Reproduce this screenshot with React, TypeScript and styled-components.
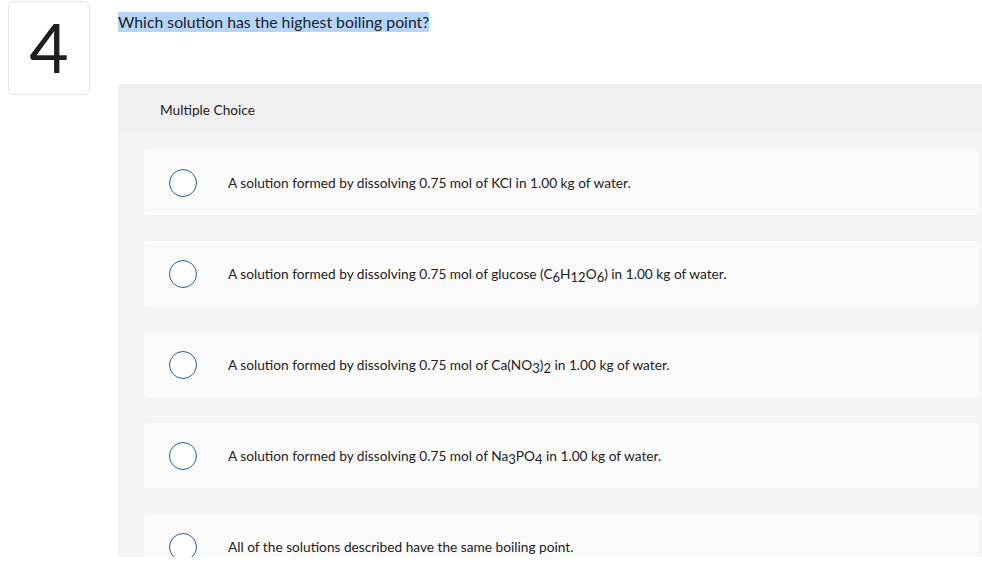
import React from "react";
import styled, { createGlobalStyle } from "styled-components";

const Global = createGlobalStyle`
  html, body { margin: 0; padding: 0; background: #ffffff; }
  body { font-family: Lato, "Open Sans", "Liberation Sans", sans-serif; color: #222222; }
`;

const Page = styled.div`
  display: flex;
  align-items: flex-start;
  width: 982px;
  height: 571px;
  overflow: hidden;
`;

const NumberBox = styled.div`
  flex: 0 0 auto;
  box-sizing: border-box;
  width: 82px;
  height: 94px;
  margin: 1px 0 0 8px;
  border: 1px solid #e4e4e4;
  border-radius: 5px;
  display: flex;
  align-items: center;
  justify-content: center;
  font-size: 68px;
  line-height: 1;
  color: #1e1e1e;
  padding-bottom: 2px;
`;

const Main = styled.div`
  flex: 1 1 auto;
  margin-left: 28px;
  display: flex;
  flex-direction: column;
`;

const Question = styled.div`
  margin-top: 12px;
  height: 72px;
  font-size: 15.8px;
  line-height: 20px;
`;

const Highlight = styled.span`
  background: #b4d5fe;
  padding: 0 0 1px;
`;

const Panel = styled.div`
  height: 473px;
  overflow: hidden;
  background: #f4f4f4;
`;

const PanelHeader = styled.div`
  height: 50px;
  background: #f0f0f0;
  display: flex;
  align-items: center;
  padding-left: 42px;
  font-size: 13.7px;
`;

const Options = styled.div`
  display: flex;
  flex-direction: column;
  gap: 26px;
  padding: 16px 3px 0 26px;
`;

const OptionCard = styled.div`
  height: 65px;
  flex: 0 0 auto;
  background: #fafafa;
  border-radius: 3px;
  display: flex;
  align-items: center;
  padding-left: 25px;
  gap: 31px;
  font-size: 13.7px;
`;

const Radio = styled.span`
  box-sizing: border-box;
  width: 28px;
  height: 28px;
  border-radius: 50%;
  border: 1.5px solid #1f5f9d;
  background: #ffffff;
  flex: 0 0 auto;
`;

const Sub = styled.sub`
  font-size: 0.95em;
  vertical-align: -0.2em;
  line-height: 0;
`;

const options: React.ReactNode[] = [
  <>A solution formed by dissolving 0.75 mol of KCl in 1.00 kg of water.</>,
  <>
    A solution formed by dissolving 0.75 mol of glucose (C<Sub>6</Sub>H<Sub>12</Sub>O<Sub>6</Sub>) in 1.00 kg of water.
  </>,
  <>
    A solution formed by dissolving 0.75 mol of Ca(NO<Sub>3</Sub>)<Sub>2</Sub> in 1.00 kg of water.
  </>,
  <>
    A solution formed by dissolving 0.75 mol of Na<Sub>3</Sub>PO<Sub>4</Sub> in 1.00 kg of water.
  </>,
  <>All of the solutions described have the same boiling point.</>,
];

export default function App() {
  return (
    <>
      <Global />
      <Page>
        <NumberBox>4</NumberBox>
        <Main>
          <Question>
            <Highlight>Which solution has the highest boiling point?</Highlight>
          </Question>
          <Panel>
            <PanelHeader>Multiple Choice</PanelHeader>
            <Options>
              {options.map((o, i) => (
                <OptionCard key={i}>
                  <Radio />
                  <span>{o}</span>
                </OptionCard>
              ))}
            </Options>
          </Panel>
        </Main>
      </Page>
    </>
  );
}
